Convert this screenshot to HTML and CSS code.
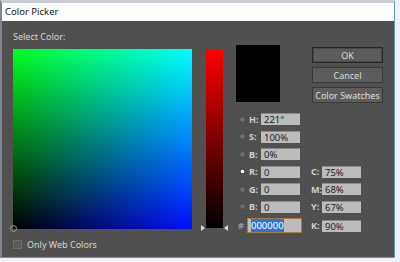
FILE: index.html
```html
<!DOCTYPE html>
<html lang="en">
<head>
  <meta charset="UTF-8">
  <title>Color Picker</title>
  <link rel="stylesheet" href="styles.css">
</head>
<body>

<div class="window">
  <div class="titlebar">Color Picker</div>

  <div class="dialog">
    <div class="picker">
      <div class="caption">Select Color:</div>
      <div class="field"><span class="marker"></span></div>
      <div class="webonly"><span class="checkbox"></span>Only Web Colors</div>
    </div>

    <div class="slider">
      <span class="arrow arrow-left"></span>
      <span class="arrow arrow-right"></span>
    </div>

    <div class="side">
      <div class="top">
        <div class="swatch"></div>
        <div class="buttons">
          <button class="btn btn-default">OK</button>
          <button class="btn">Cancel</button>
          <button class="btn">Color Swatches</button>
        </div>
      </div>

      <div class="values">
        <span class="radio"></span><span class="key">H:</span><span class="box">221°</span>
        <span class="spacer"></span><span></span><span></span>

        <span class="radio"></span><span class="key">S:</span><span class="box">100%</span>
        <span class="spacer"></span><span></span><span></span>

        <span class="radio"></span><span class="key">B:</span><span class="box">0%</span>
        <span class="spacer"></span><span></span><span></span>

        <span class="radio checked"></span><span class="key">R:</span><span class="box">0</span>
        <span class="spacer"></span><span class="key">C:</span><span class="box">75%</span>

        <span class="radio"></span><span class="key">G:</span><span class="box">0</span>
        <span class="spacer"></span><span class="key">M:</span><span class="box">68%</span>

        <span class="radio"></span><span class="key">B:</span><span class="box">0</span>
        <span class="spacer"></span><span class="key">Y:</span><span class="box">67%</span>

        <span class="hash">#</span><span class="box hex"><span class="selected">000000</span></span>
        <span class="spacer"></span><span class="key">K:</span><span class="box">90%</span>
      </div>
    </div>
  </div>
</div>

</body>
</html>
```

FILE: styles.css
```css
body {
  margin: 0;
  background: #eef1f5;
  font-family: 'Noto Sans', 'Open Sans', sans-serif;
}
.window {
  width: 392px;
  border-left: 2px solid #7d8792;
  border-top: 3px solid #c9cdd3;
  border-right: 1px solid #6b93c4;
  border-bottom: 1px solid #6b93c4;
}
.titlebar {
  height: 18px;
  line-height: 18px;
  padding-left: 3px;
  background: #fff;
  color: #111;
  font-size: 9.5px;
}
.dialog {
  height: 226px;
  padding: 10px 0 0 11px;
  background: #505050;
  color: #d4d4d4;
  display: flex;
  font-size: 9px;
}
.picker {
  display: flex;
  flex-direction: column;
}
.caption {
  height: 12px;
  line-height: 12px;
  margin-bottom: 6px;
}
.field {
  position: relative;
  width: 179px;
  height: 180px;
  background: linear-gradient(to bottom, #00ff20, #000), linear-gradient(to right, #000, #0010ff);
  background-blend-mode: screen;
}
.marker {
  position: absolute;
  left: -3px;
  bottom: -3px;
  width: 5px;
  height: 5px;
  border: 1px solid #9a9a9a;
  border-radius: 50%;
}
.webonly {
  display: flex;
  align-items: center;
  gap: 5px;
  margin-top: 11px;
  height: 8px;
}
.checkbox {
  width: 7px;
  height: 7px;
  border: 1px solid #6e6e6e;
  background: #5a5a5a;
}
.slider {
  position: relative;
  width: 17px;
  height: 179px;
  margin: 18px 0 0 14px;
  background: linear-gradient(to bottom, #ff0000, #000);
}
.arrow {
  position: absolute;
  bottom: -3px;
  width: 0;
  height: 0;
  border-top: 3px solid transparent;
  border-bottom: 3px solid transparent;
}
.arrow-left {
  left: -5px;
  border-left: 4px solid #d8d8d8;
}
.arrow-right {
  right: -5px;
  border-right: 4px solid #d8d8d8;
}
.side {
  margin: 14px 0 0 13px;
}
.top {
  display: flex;
  align-items: flex-start;
  gap: 32px;
}
.swatch {
  width: 44px;
  height: 57px;
  background: #000;
}
.buttons {
  display: flex;
  flex-direction: column;
  gap: 4px;
  margin-top: 2px;
}
.btn {
  width: 71px;
  height: 16px;
  padding: 0;
  border: 1px solid #383838;
  background: #5c5c5c;
  color: #dcdcdc;
  font-family: inherit;
  font-size: 9px;
}
.btn-default {
  border-color: #262626;
  box-shadow: inset 0 0 0 1px #4a4a4a;
}
.values {
  display: grid;
  grid-template-columns: 13px 12px 39px 11px 11px 39px;
  grid-template-rows: repeat(6, 12px) 15px;
  row-gap: 5.5px;
  margin-top: 10px;
  align-items: center;
}
.radio {
  width: 7px;
  height: 7px;
  margin-left: 3px;
  box-sizing: border-box;
  border-radius: 50%;
  border: 1px solid #474747;
  background: #6c6c6c;
}
.radio.checked {
  background: radial-gradient(circle, #f0f0f0 0 1.5px, #474747 2.2px);
}
.key {
  font-weight: 700;
  color: #cfcfcf;
}
.box {
  height: 12px;
  line-height: 12px;
  padding-left: 3px;
  box-sizing: border-box;
  background: #bcbcbc;
  border-top: 1px solid #8a8a8a;
  color: #1e1e1e;
  font-size: 9.5px;
}
.hash {
  padding-left: 2px;
  color: #9a9a9a;
  font-weight: 700;
}
.box.hex {
  grid-column: 2 / 4;
  height: 15px;
  line-height: 13px;
  margin: 0 -2px 0 -2px;
  border: 1px solid #b0763a;
  background: #bcbcbc;
}
.selected {
  background: #2a78d6;
  color: #fff;
}
```
